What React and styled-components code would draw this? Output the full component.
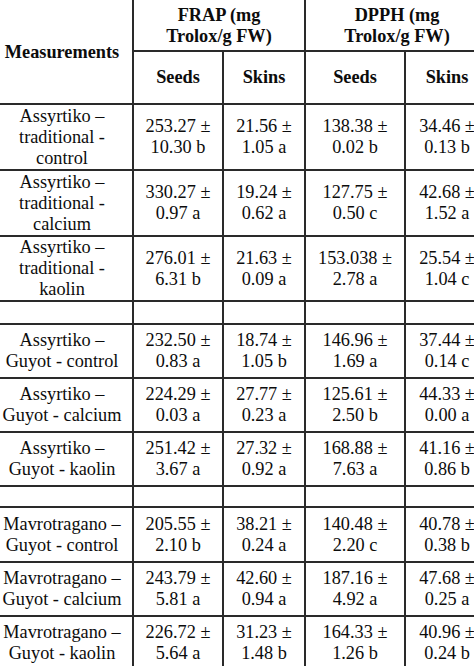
import React from "react";
import styled, { createGlobalStyle } from "styled-components";

const rows = [
  { name: ["Assyrtiko –", "traditional -", "control"], h: 66, values: [["253.27 ±", "10.30 b"], ["21.56 ±", "1.05 a"], ["138.38 ±", "0.02 b"], ["34.46 ±", "0.13 b"]] },
  { name: ["Assyrtiko –", "traditional -", "calcium"], h: 66, values: [["330.27 ±", "0.97 a"], ["19.24 ±", "0.62 a"], ["127.75 ±", "0.50 c"], ["42.68 ±", "1.52 a"]] },
  { name: ["Assyrtiko –", "traditional -", "kaolin"], h: 65, values: [["276.01 ±", "6.31 b"], ["21.63 ±", "0.09 a"], ["153.038 ±", "2.78 a"], ["25.54 ±", "1.04 c"]] },
  { spacer: true, h: 23 },
  { name: ["Assyrtiko –", "Guyot - control"], h: 54, values: [["232.50 ±", "0.83 a"], ["18.74 ±", "1.05 b"], ["146.96 ±", "1.69 a"], ["37.44 ±", "0.14 c"]] },
  { name: ["Assyrtiko –", "Guyot - calcium"], h: 54, values: [["224.29 ±", "0.03 a"], ["27.77 ±", "0.23 a"], ["125.61 ±", "2.50 b"], ["44.33 ±", "0.00 a"]] },
  { name: ["Assyrtiko –", "Guyot - kaolin"], h: 54, values: [["251.42 ±", "3.67 a"], ["27.32 ±", "0.92 a"], ["168.88 ±", "7.63 a"], ["41.16 ±", "0.86 b"]] },
  { spacer: true, h: 21 },
  { name: ["Mavrotragano –", "Guyot - control"], h: 55, values: [["205.55 ±", "2.10 b"], ["38.21 ±", "0.24 a"], ["140.48 ±", "2.20 c"], ["40.78 ±", "0.38 b"]] },
  { name: ["Mavrotragano –", "Guyot - calcium"], h: 54, values: [["243.79 ±", "5.81 a"], ["42.60 ±", "0.94 a"], ["187.16 ±", "4.92 a"], ["47.68 ±", "0.25 a"]] },
  { name: ["Mavrotragano –", "Guyot - kaolin"], h: 54, values: [["226.72 ±", "5.64 a"], ["31.23 ±", "1.48 b"], ["164.33 ±", "1.26 b"], ["40.96 ±", "0.24 b"]] },
];

const colWidths = [142, 90, 82, 100, 84];

function Lines({ lines }) {
  return lines.map((l, i) => (
    <React.Fragment key={i}>
      {i > 0 && <br />}
      {l}
    </React.Fragment>
  ));
}

export default function App() {
  return (
    <>
      <GlobalStyle />
      <Page>
        <Table>
          <colgroup>
            {colWidths.map((w, i) => (
              <col key={i} style={{ width: w }} />
            ))}
          </colgroup>
          <thead>
            <Row $h={51}>
              <HeadCell rowSpan={2} $noTop>
                Measurements
              </HeadCell>
              <HeadCell colSpan={2} $noTop>
                FRAP (mg
                <br />
                Trolox/g FW)
              </HeadCell>
              <HeadCell colSpan={2} $noTop>
                DPPH (mg
                <br />
                Trolox/g FW)
              </HeadCell>
            </Row>
            <Row $h={53}>
              <HeadCell>Seeds</HeadCell>
              <HeadCell>Skins</HeadCell>
              <HeadCell>Seeds</HeadCell>
              <HeadCell>Skins</HeadCell>
            </Row>
          </thead>
          <tbody>
            {rows.map((r, i) =>
              r.spacer ? (
                <Row key={i} $h={r.h}>
                  {colWidths.map((_, j) => (
                    <Cell key={j} />
                  ))}
                </Row>
              ) : (
                <Row key={i} $h={r.h}>
                  <Cell>
                    <Lines lines={r.name} />
                  </Cell>
                  {r.values.map((v, j) => (
                    <Cell key={j}>
                      <Lines lines={v} />
                    </Cell>
                  ))}
                </Row>
              )
            )}
          </tbody>
        </Table>
      </Page>
    </>
  );
}

const GlobalStyle = createGlobalStyle`
  html, body {
    margin: 0;
    padding: 0;
    background: #ffffff;
    overflow: hidden;
  }
`;

const Page = styled.div`
  width: 474px;
  height: 666px;
  overflow: hidden;
  background: #ffffff;
  font-family: "Liberation Serif", "Times New Roman", serif;
  color: #0c0c0c;
`;

const Table = styled.table`
  border-collapse: collapse;
  table-layout: fixed;
  width: 498px;
  margin-left: -10px;
  margin-top: -1px;
  font-size: 18.3px;
  line-height: 21px;
`;

const Row = styled.tr`
  height: ${(p) => p.$h}px;
`;

const HeadCell = styled.th`
  border: 2px solid #2a2a2a;
  border-top-color: ${(p) => (p.$noTop ? "#ffffff" : "#2a2a2a")};
  padding: 0 2px;
  text-align: center;
  vertical-align: middle;
  font-weight: bold;
  line-height: 20.5px;
`;

const Cell = styled.td`
  border: 2px solid #2a2a2a;
  padding: 0 2px;
  text-align: center;
  vertical-align: middle;
  white-space: nowrap;
`;
